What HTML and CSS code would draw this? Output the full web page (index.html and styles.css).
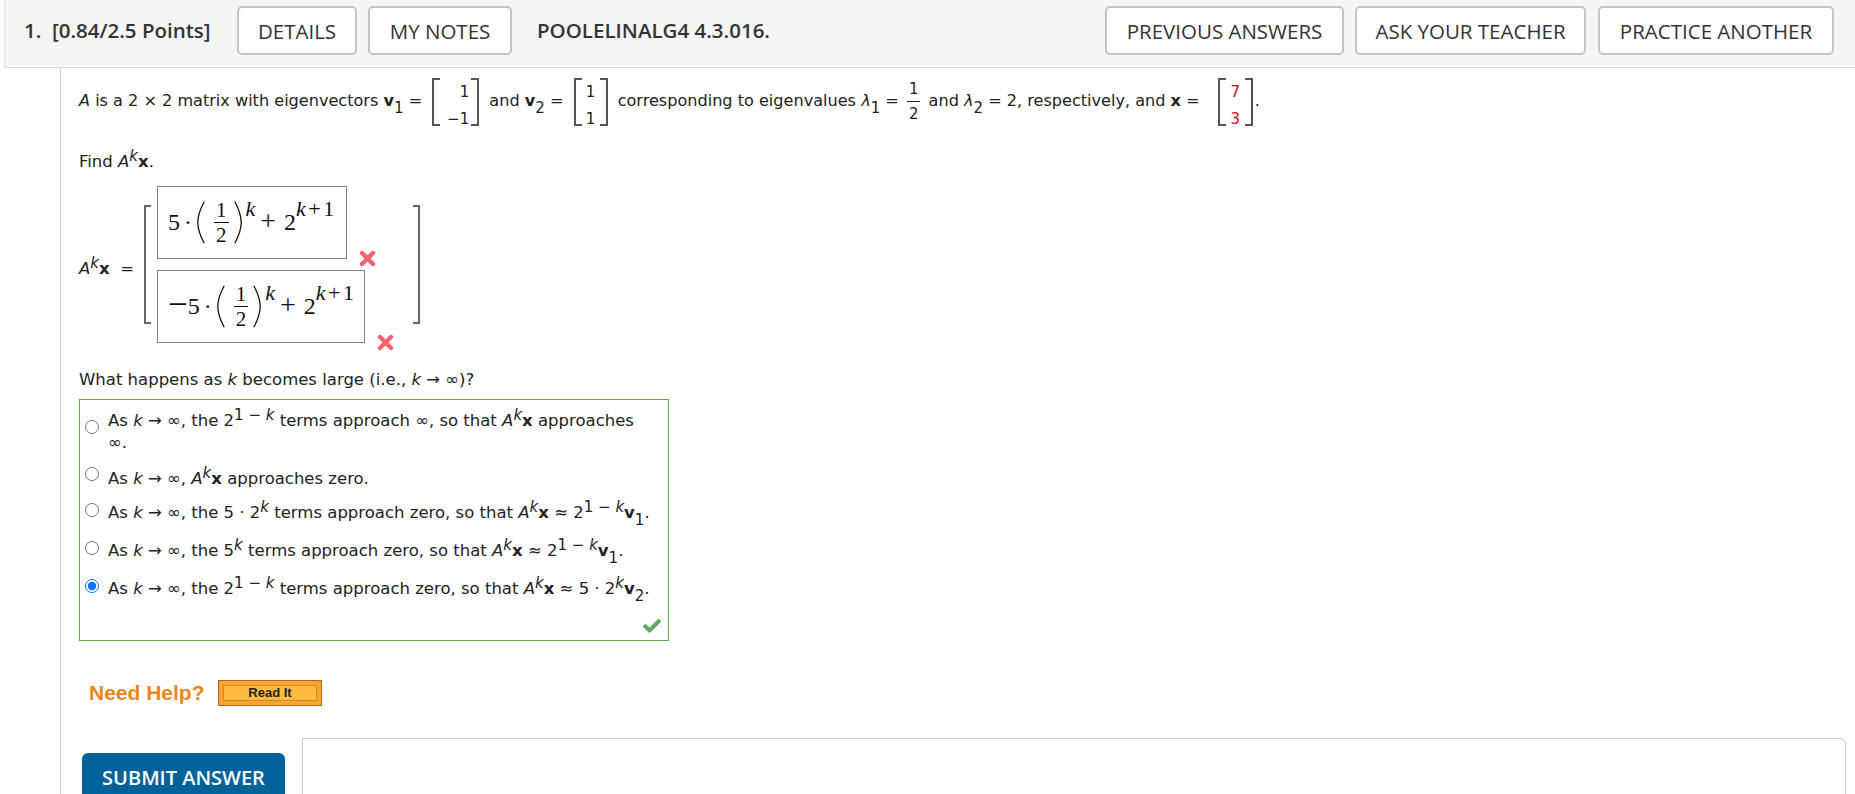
FILE: index.html
```html
<!DOCTYPE html>
<html lang="en">
<head>
<meta charset="utf-8">
<title>Question 1</title>
<link rel="stylesheet" href="styles.css">
</head>
<body>
<header class="bar">
  <strong class="pts">1.&nbsp; [0.84/2.5 Points]</strong>
  <button class="btn">DETAILS</button>
  <button class="btn">MY NOTES</button>
  <strong class="code">POOLELINALG4 4.3.016.</strong>
  <span class="spacer"></span>
  <button class="btn prev">PREVIOUS ANSWERS</button>
  <button class="btn ask">ASK YOUR TEACHER</button>
  <button class="btn practice">PRACTICE ANOTHER</button>
</header>
<main class="body">
  <p class="intro"><i>A</i> is a 2 × 2 matrix with eigenvectors <b>v</b><sub>1</sub> =
    <span class="matrix m1"><span class="cells"><span>1</span><span>−1</span></span></span>
    and <b>v</b><sub>2</sub> =
    <span class="matrix m2"><span class="cells"><span>1</span><span>1</span></span></span>
    corresponding to eigenvalues <i>λ</i><sub>1</sub> =
    <span class="frac"><span class="num">1</span><span>2</span></span>
    and <i>λ</i><sub>2</sub> = 2, respectively, and <b>x</b> =
    <span class="matrix m3"><span class="cells red"><span>7</span><span>3</span></span></span>.</p>
  <p class="find">Find <i>A</i><sup><i>k</i></sup><b>x</b>.</p>

  <div class="answer">
    <span class="label"><i>A</i><sup><i>k</i></sup><b>x</b> &nbsp;=</span>
    <span class="bracket left"></span>
    <div class="entries">
      <div class="entry">
        <div class="box first">
          <span class="tex">5<span class="dot">·</span></span>
          <svg class="paren" viewBox="0 0 10 54"><path d="M9 1C3 12 1 19 1 27s2 15 8 26" fill="none" stroke="#111" stroke-width="1.6"/></svg>
          <span class="tfrac"><span class="tnum">1</span><span>2</span></span>
          <svg class="paren" viewBox="0 0 10 54"><path d="M1 1c6 11 8 18 8 26s-2 15-8 26" fill="none" stroke="#111" stroke-width="1.6"/></svg>
          <span class="tex tail"><sup class="exp"><i>k</i></sup><span class="plus">+</span>2<sup class="exp"><i>k</i>+1</sup></span>
        </div>
        <svg class="cross" viewBox="0 0 17 17"><path d="M3 3l11 11M14 3L3 14" stroke="#f4636f" stroke-width="4.4" stroke-linecap="round"/></svg>
      </div>
      <div class="entry">
        <div class="box second">
          <span class="tex"><span class="minus">−</span>5<span class="dot">·</span></span>
          <svg class="paren" viewBox="0 0 10 54"><path d="M9 1C3 12 1 19 1 27s2 15 8 26" fill="none" stroke="#111" stroke-width="1.6"/></svg>
          <span class="tfrac"><span class="tnum">1</span><span>2</span></span>
          <svg class="paren" viewBox="0 0 10 54"><path d="M1 1c6 11 8 18 8 26s-2 15-8 26" fill="none" stroke="#111" stroke-width="1.6"/></svg>
          <span class="tex tail"><sup class="exp"><i>k</i></sup><span class="plus">+</span>2<sup class="exp"><i>k</i>+1</sup></span>
        </div>
        <svg class="cross" viewBox="0 0 17 17"><path d="M3 3l11 11M14 3L3 14" stroke="#f4636f" stroke-width="4.4" stroke-linecap="round"/></svg>
      </div>
    </div>
    <span class="bracket right"></span>
  </div>

  <p class="ask-line">What happens as <i>k</i> becomes large (i.e., <i>k</i> → ∞)?</p>

  <div class="choices">
    <label class="choice one"><input type="radio" name="q"><span>As <i>k</i> → ∞, the 2<sup>1 − <i>k</i></sup> terms approach ∞, so that <i>A</i><sup><i>k</i></sup><b>x</b> approaches ∞.</span></label>
    <label class="choice two"><input type="radio" name="q"><span>As <i>k</i> → ∞, <i>A</i><sup><i>k</i></sup><b>x</b> approaches zero.</span></label>
    <label class="choice"><input type="radio" name="q"><span>As <i>k</i> → ∞, the 5 · 2<sup><i>k</i></sup> terms approach zero, so that <i>A</i><sup><i>k</i></sup><b>x</b> ≈ 2<sup>1 − <i>k</i></sup><b>v</b><sub>1</sub>.</span></label>
    <label class="choice"><input type="radio" name="q"><span>As <i>k</i> → ∞, the 5<sup><i>k</i></sup> terms approach zero, so that <i>A</i><sup><i>k</i></sup><b>x</b> ≈ 2<sup>1 − <i>k</i></sup><b>v</b><sub>1</sub>.</span></label>
    <label class="choice"><input type="radio" name="q" checked><span>As <i>k</i> → ∞, the 2<sup>1 − <i>k</i></sup> terms approach zero, so that <i>A</i><sup><i>k</i></sup><b>x</b> ≈ 5 · 2<sup><i>k</i></sup><b>v</b><sub>2</sub>.</span></label>
    <svg class="check" viewBox="0 0 20 16"><path d="M2 8l5.5 5.5L18 3" fill="none" stroke="#5fae5f" stroke-width="4" stroke-linejoin="round"/></svg>
  </div>

  <div class="help">
    <span class="need">Need Help?</span>
    <span class="readit"><span class="readit-inner">Read It</span></span>
  </div>

  <div class="footer">
    <button class="submit">SUBMIT ANSWER</button>
    <div class="notes"></div>
  </div>
</main>
</body>
</html>
```
FILE: styles.css
```css
* { box-sizing: border-box; }
html, body { margin: 0; height: 794px; overflow: hidden; background: #fff; }
body { font-family: "DejaVu Sans", Verdana, sans-serif; font-size: 16.5px; color: #222; }

.bar {
  margin-left: 4px;
  height: 68px;
  display: flex;
  align-items: flex-start;
  padding: 6px 21px 0 19px;
  background: #f5f5f5;
  border-left: 1px solid #e2e2e2;
  border-bottom: 1px solid #dcdcdc;
  font-family: "Open Sans", sans-serif;
  font-size: 20.5px;
  color: #333;
}
.pts, .code { font-weight: 600; line-height: 49px; color: #333; white-space: nowrap; }
.pts { width: 213px; }
.code { margin-left: 14px; }
.spacer { flex: 1; }
.btn {
  height: 49px;
  margin-right: 11px;
  padding: 0;
  background: #fff;
  border: 2px solid #c4c4c4;
  border-radius: 5px;
  font: 400 20.5px "Open Sans", sans-serif;
  color: #333;
  width: 120px;
  white-space: nowrap;
}
.btn + .btn { width: 144px; }
.btn.prev { width: 239px; margin-right: 11px; }
.btn.ask { width: 231px; margin-right: 12px; }
.btn.practice { width: 236px; margin-right: 0; }

.body { margin-left: 60px; border-left: 1px solid #ccc; padding-left: 18px; height: 726px; }
p { margin: 0; }
sub, sup { font-size: 15px; line-height: 0; }
sup { vertical-align: 6px; }
sub { vertical-align: -7px; }

.intro { height: 66px; line-height: 66px; white-space: nowrap; font-size: 16.1px; }
.find { height: 48px; padding-top: 13px; line-height: 30px; }
b { font-weight: 700; }

.matrix {
  display: inline-flex;
  vertical-align: middle;
  height: 48px;
  margin: 0 5px;
  position: relative;
}
.m1 { width: 47px; }
.m2 { width: 34px; }
.m3 { width: 35px; margin-left: 13px; margin-right: 2px; }
.matrix::before, .matrix::after {
  content: "";
  width: 6px;
  flex: none;
  border: 2px solid #555;
}
.matrix::before { border-right: 0; }
.matrix::after { border-left: 0; }
.cells {
  flex: 1;
  display: flex;
  flex-direction: column;
  justify-content: space-between;
  align-items: flex-end;
  padding: 3px 2px 0 0;
  margin-bottom: -4px;
  font-size: 15px;
  line-height: 22px;
}
.m2 .cells, .m3 .cells { align-items: center; padding: 3px 0 0; }
.red { color: #c8101a; }

.frac {
  display: inline-flex;
  flex-direction: column;
  vertical-align: middle;
  text-align: center;
  line-height: 24px;
  font-size: 15px;
  margin: 0 3px;
}
.num { border-bottom: 1px solid #222; padding: 0 2px; }

.answer { display: flex; align-items: center; height: 165px; }
.label { width: 65px; padding-top: 8px; }
.bracket { width: 7px; height: 119px; border: 2px solid #666; flex: none; }
.bracket.left { border-right: 0; }
.bracket.right { border-left: 0; }
.entries { width: 256px; margin-left: 6px; display: flex; flex-direction: column; gap: 11px; }
.entry { display: flex; align-items: flex-end; }
.box {
  height: 73px;
  display: flex;
  align-items: center;
  padding-left: 10px;
  border: 1px solid #808080;
  font-family: "Liberation Serif", serif;
  font-size: 24px;
  color: #111;
}
.box.first { width: 190px; }
.box.second { width: 208px; }
.tex { white-space: nowrap; }
.tex.tail { margin-left: 4px; }
.exp { font-size: 22px; vertical-align: 14px; letter-spacing: 2.5px; }
.tail .exp:first-child { letter-spacing: 0; }
.plus { margin: 0 8px 0 5px; font-size: 28px; line-height: 0; }
.minus { margin-right: 0; font-size: 35px; line-height: 0; vertical-align: -2px; }
.dot { margin: 0 5px 0 4px; }
.paren { width: 8px; height: 53px; flex: none; }
.tfrac {
  display: flex;
  flex-direction: column;
  align-items: center;
  margin: 0 5px 0 9px;
  font-size: 21px;
  line-height: 24px;
}
.tnum { border-bottom: 1px solid #111; padding: 0 2px; }
.cross { width: 17px; height: 17px; margin: 0 0 -8px 12px; flex: none; }

.ask-line { height: 30px; margin-top: 22px; line-height: 22px; }

.choices {
  width: 590px;
  height: 242px;
  position: relative;
  padding: 10px 5px 0 5px;
  border: 1px solid #69a84f;
}
.choice { display: flex; gap: 9px; align-items: flex-start; height: 38px; line-height: 22px; white-space: nowrap; }
.choice.one { height: 58px; padding-right: 17px; white-space: normal; }
.choice.two { height: 34px; }
.choice input { width: 14px; height: 14px; margin: 1px 0 0; flex: none; }
.choice.one input { margin-top: 10px; }
.choice.two input { margin-top: -1px; }
.check { position: absolute; right: 6px; bottom: 7px; width: 20px; height: 16px; }

.help { display: flex; align-items: center; margin: 39px 0 0 10px; height: 26px; }
.need { font: 700 21px "Liberation Sans", sans-serif; color: #f0841a; width: 129px; }
.readit {
  width: 104px;
  height: 26px;
  padding: 4px;
  background: #fba32f;
  border: 1px solid #a86a28;
}
.readit-inner {
  display: block;
  height: 16px;
  background: #ffbb40;
  border: 1px solid #c88a30;
  text-align: center;
  font: 700 13px/14px "Liberation Sans", sans-serif;
  color: #222;
}

.footer { display: flex; align-items: flex-start; margin: 32px 0 0 3px; gap: 17px; }
.submit {
  flex: none;
  width: 203px;
  height: 60px;
  margin-top: 15px;
  padding: 0 0 11px;
  background: #006298;
  border: 0;
  border-radius: 6px;
  font: 600 20px "Open Sans", sans-serif;
  color: #fff;
}
.notes {
  flex: 1;
  height: 90px;
  margin-right: 9px;
  border: 1px solid #ccc;
  border-radius: 0 6px 0 0;
}
```
